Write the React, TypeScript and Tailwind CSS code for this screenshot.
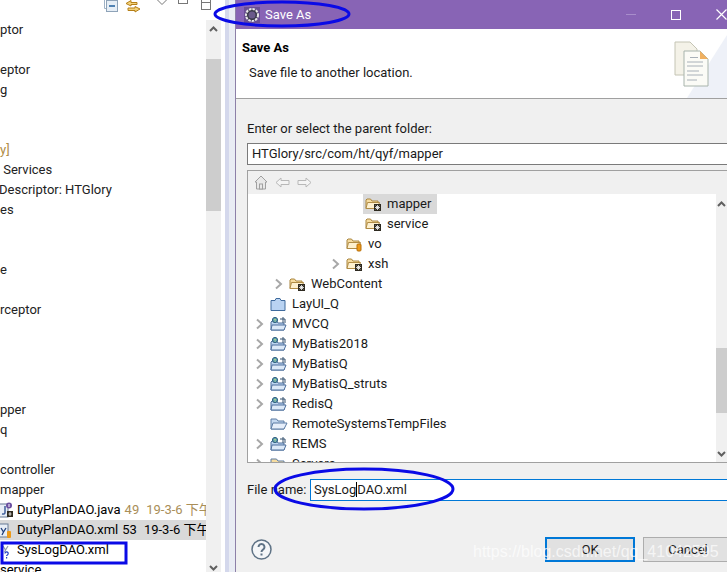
const font = { fontFamily: 'Roboto, "Noto Sans CJK SC", sans-serif' }

const Chevron = () => (
  <svg width="9" height="12" viewBox="0 0 9 12" fill="none" stroke="#a8a8a8" strokeWidth="2">
    <path d="M2 1.5 7 6l-5 4.5" />
  </svg>
)

const Folder = ({ badge }: { badge?: 'pkg' | 'jar' }) => (
  <svg width="17" height="16" viewBox="0 0 17 16">
    <path d="M1 4V12.5H13V5H7L5.5 3H2Z" fill="#f6dca0" stroke="#a9853f" />
    <path d="M2.5 6.5H14.5L12.5 12.5H1Z" fill="#fdf0cf" stroke="#b08c46" />
    {badge === 'pkg' && (
      <>
        <rect x="9" y="8" width="7" height="7" fill="#2e2a20" />
        <path d="M12.5 9v5M10 11.5h5M10.7 9.7l3.6 3.6M14.3 9.7l-3.6 3.6" stroke="#fff" strokeWidth="0.8" />
      </>
    )}
    {badge === 'jar' && <rect x="11" y="8" width="4" height="7" rx="1" fill="#ec9a1a" stroke="#b86f08" />}
  </svg>
)

const Project = () => (
  <svg width="18" height="16" viewBox="0 0 18 16">
    <path d="M1 6V14H14V7H8L6.5 5H2Z" fill="#bcd4f0" stroke="#4c6f9c" />
    <path d="M2 9H16L14 14H1Z" fill="#dce9f8" stroke="#4c6f9c" />
    <circle cx="5" cy="4" r="2.6" fill="#5f9fb0" stroke="#2f5f7e" />
    <path d="M4 3.5h2M4.5 5h1.5" stroke="#a4d08a" />
    <path d="M10 3h5v4M13 1v6" fill="none" stroke="#35506e" />
  </svg>
)

const OpenFolder = ({ color }: { color: string }) => (
  <svg width="18" height="16" viewBox="0 0 18 16">
    <path d="M1 3V13H14V5H8L6.5 3Z" fill={color} stroke="#5b7ba3" />
    <path d="M3 7H17L14 13H1Z" fill="#e6eefa" stroke="#5b7ba3" />
  </svg>
)

const ClosedProject = () => (
  <svg width="16" height="15" viewBox="0 0 16 15">
    <path d="M1 3.5H5L6 1.5H10L11 3.5H15V13.5H1Z" fill="#b9d3f2" stroke="#3f6a9c" />
  </svg>
)

const Row = ({ indent, arrow, icon, label, active }: { indent: number; arrow?: boolean; icon: React.ReactNode; label: string; active?: boolean }) => (
  <div className="flex h-5 items-center" style={{ paddingLeft: indent }}>
    <span className="flex w-[15px] shrink-0 items-center pl-[2px]">{arrow && <Chevron />}</span>
    <span className={`flex h-5 items-center pr-[6px] ${active ? 'bg-[#d9d9d9]' : ''}`}>
      <span className="ml-[2px] flex w-[22px] shrink-0 items-center">{icon}</span>
      <span className="whitespace-nowrap text-[#1a1a1a]">{label}</span>
    </span>
  </div>
)

const sideRows = [
  'ptor', '', 'eptor', 'g', '', '', 'y]', ' Services', 'Descriptor: HTGlory', 'es', '', '', 'e', '', 'rceptor', '', '', '', '', 'pper', 'q', '', 'controller', 'mapper',
]

export default function App() {
  return (
    <div className="relative flex h-[572px] w-[727px] overflow-hidden bg-white text-[13px] leading-5" style={font}>
      <div className="flex w-[206px] shrink-0 flex-col">
        <div className="flex h-5 w-[221px] shrink-0 items-start pl-[104px]">
          <svg className="shrink-0" width="14" height="13" viewBox="0 0 14 13" fill="none">
            <path d="M0.5 0V8.5H3" stroke="#9fb2c6" />
            <rect x="2.5" y="0.5" width="11" height="11" fill="#e6eef6" stroke="#8ea3b8" />
            <path d="M5 6h6" stroke="#1f5f9c" strokeWidth="1.5" />
          </svg>
          <svg className="ml-[7px] shrink-0" width="16" height="13" viewBox="0 0 16 13" fill="#f2d27a" stroke="#b57f18">
            <path d="M6 0.5 1 3.5 6 6V4.5H12V2.5H6Z" />
            <path d="M10 6.5 15 9 10 12V10.5H3V8H10Z" />
          </svg>
          <svg className="ml-[16px] shrink-0" width="10" height="5" viewBox="0 0 10 5" fill="none" stroke="#777"><path d="M0.5 0 5 4.5 9.5 0" /></svg>
          <div className="ml-[11px] h-[4px] w-[10px] border border-t-0 border-[#777]" />
          <div className="ml-[13px] flex h-[10px] w-[10px] flex-col border border-t-0 border-[#777]">
            <div className="mt-[2px] h-px bg-[#777]" />
          </div>
        </div>
        {sideRows.map((t, i) => (
          <div key={i} className={`h-5 shrink-0 whitespace-pre ${t === 'y]' ? 'text-[#b08c46]' : 'text-[#222]'} ${t === 'Descriptor: HTGlory' ? '-ml-[1px]' : ''}`}>
            {t}
          </div>
        ))}
        <div className="flex h-5 shrink-0 items-center overflow-hidden whitespace-nowrap">
          <svg className="mr-[2px] shrink-0" width="15" height="17" viewBox="0 0 15 17">
            <rect x="-3" y="2" width="11" height="13" fill="#e8eef6" stroke="#667a96" />
            <path d="M5 4V10.5Q5 12.5 2 12" fill="none" stroke="#3f5f9c" strokeWidth="1.5" />
            <rect x="7" y="9" width="6" height="6" fill="#2e2a20" />
            <path d="M10 10v4M8.5 12h3" stroke="#fff" strokeWidth="0.8" />
            <circle cx="9" cy="3.5" r="3" fill="#6b4fa0" />
            <path d="M9 2v3" stroke="#fff" />
          </svg>
          <span>DutyPlanDAO.java</span>
          <span className="ml-1 text-[#a98e58]">49</span>
          <span className="ml-[7px] text-[#a98e58]">19-3-6 下午</span>
        </div>
        <div className="flex h-5 shrink-0 items-center overflow-hidden whitespace-nowrap bg-[#d9d9d9]">
          <svg className="mr-[2px] shrink-0" width="15" height="17" viewBox="0 0 15 17">
            <rect x="-3" y="2" width="11" height="13" fill="#e8eef6" stroke="#667a96" />
            <path d="M1 6 3.5 10 6 6M3.5 10 2 13" fill="none" stroke="#1f3f7c" strokeWidth="1.3" />
            <rect x="7" y="9" width="4" height="7" rx="1" fill="#ec9a1a" />
          </svg>
          <span>DutyPlanDAO.xml</span>
          <span className="ml-1">53</span>
          <span className="ml-[7px]">19-3-6 下午</span>
        </div>
        <div className="flex h-5 shrink-0 items-center whitespace-nowrap">
          <svg className="mr-[2px] shrink-0" width="15" height="17" viewBox="0 0 15 17" fill="none">
            <path d="M3 4 5.5 8 8 4M5.5 8 4.5 10" stroke="#8f98a8" strokeWidth="1.2" />
            <path d="M5 11.5a1.6 1.6 0 1 1 2.4 1.4c-.5.3-.8.6-.8 1.2M6.6 15v1.4" stroke="#1f3fc0" strokeWidth="1.2" />
          </svg>
          <span>SysLogDAO.xml</span>
        </div>
        <div className="h-5 shrink-0">service</div>
      </div>

      <div className="flex w-[15px] shrink-0 flex-col pt-5">
        <div className="flex h-[39px] shrink-0 justify-center bg-[#f0f0f0] pt-[6px]">
          <svg width="9" height="6" viewBox="0 0 9 6" fill="none" stroke="#606060" strokeWidth="2"><path d="M1 5 4.5 1.5 8 5" /></svg>
        </div>
        <div className="h-[152px] shrink-0 bg-[#cdcdcd]" />
        <div className="flex flex-1 items-end justify-center bg-[#f0f0f0] pb-[1px]">
          <svg width="9" height="6" viewBox="0 0 9 6" fill="none" stroke="#606060" strokeWidth="2"><path d="M1 1 4.5 4.5 8 1" /></svg>
        </div>
      </div>
      <div className="w-1 shrink-0 bg-white" />
      <div className="w-1 shrink-0 bg-[#d4d8ec]" />
      <div className="w-[6px] shrink-0 bg-[#e9ecf4]" />
      <div className="w-px shrink-0 bg-[#8d80a8]" />

      <div className="flex min-w-0 flex-1 flex-col bg-[#f0f0f0] text-[#1a1a1a]">
        <div className="flex h-[29px] shrink-0 items-center bg-[#8864b5] pl-2 text-white">
          <svg className="shrink-0" width="16" height="16" viewBox="0 0 16 16">
            <rect width="16" height="16" fill="#6a4f94" />
            <circle cx="8" cy="8" r="6" fill="#3a3a4a" stroke="#e8e8e8" strokeWidth="2" strokeDasharray="2.5 1" />
            <circle cx="8" cy="8" r="3.5" fill="#6a5a8a" />
          </svg>
          <span className="ml-[5px]">Save As</span>
          <div className="ml-auto flex items-center">
            <div className="h-px w-[10px] bg-[#a88dcb]" />
            <div className="ml-[35px] h-[10px] w-[10px] border border-white" />
            <svg className="ml-[35px] shrink-0" width="11" height="11" viewBox="0 0 11 11" fill="none" stroke="#ffffff" strokeWidth="1.2"><path d="M0.5 0.5 10.5 10.5M10.5 0.5 0.5 10.5" /></svg>
          </div>
        </div>

        <div className="flex h-[70px] shrink-0 justify-between border-b border-[#a0a0a0] bg-white">
          <div className="pl-[6px]">
            <div className="pt-[9px] font-bold text-black">Save As</div>
            <div className="pl-[7px] pt-[5px]">Save file to another location.</div>
          </div>
          <svg className="shrink-0" width="60" height="69" viewBox="0 0 60 69">
            <path d="M60 6 20 69H60Z" fill="#eef1f8" />
            <path d="M8 13H23L30 20V46H8Z" fill="#f4f2e8" stroke="#c4c4b4" />
            <path d="M17 22H33L41 30V57H17Z" fill="#fbfbf6" stroke="#a8b4ac" />
            <path d="M33 22V30H41Z" fill="#f0b060" />
            <path d="M23 28.5H31M20 33H36M20 37H36M20 42H32M20 46H36M20 51H30" stroke="#a8b0b8" />
          </svg>
        </div>

        <div className="flex min-h-0 flex-1 flex-col pl-[11px]">
          <div className="h-5 pt-[20px] leading-5">Enter or select the parent folder:</div>
          <div className="mt-[24px] h-[22px] shrink-0 border border-r-0 border-[#7a7a7a] bg-white pl-1 leading-5">HTGlory/src/com/ht/qyf/mapper</div>
          <div className="mt-[5px] flex h-[293px] shrink-0 flex-col border border-r-0 border-[#a0a0a0]">
            <div className="flex h-[23px] shrink-0 items-center gap-[7px] pl-[6px]">
              <svg width="14" height="15" viewBox="0 0 14 15" fill="#e8e8e8" stroke="#a0a0a0"><path d="M7 1 13 7H11.5V14H2.5V7H1Z" /><rect x="5.5" y="9" width="3" height="5" /></svg>
              <svg width="15" height="11" viewBox="0 0 15 11" fill="#f4f4f4" stroke="#b8b8b8"><path d="M1 5.5 6 1V3.5H14V7.5H6V10Z" /></svg>
              <svg width="15" height="11" viewBox="0 0 15 11" fill="#f4f4f4" stroke="#b8b8b8"><path d="M14 5.5 9 1V3.5H1V7.5H9V10Z" /></svg>
            </div>
            <div className="flex min-h-0 flex-1">
              <div className="min-w-0 flex-1 overflow-hidden bg-white">
                <Row indent={100} icon={<Folder badge="pkg" />} label="mapper" active />
                <Row indent={100} icon={<Folder badge="pkg" />} label="service" />
                <Row indent={81} icon={<Folder badge="jar" />} label="vo" />
                <Row indent={81} arrow icon={<Folder badge="pkg" />} label="xsh" />
                <Row indent={24} arrow icon={<Folder badge="pkg" />} label="WebContent" />
                <Row indent={5} icon={<ClosedProject />} label="LayUI_Q" />
                <Row indent={5} arrow icon={<Project />} label="MVCQ" />
                <Row indent={5} arrow icon={<Project />} label="MyBatis2018" />
                <Row indent={5} arrow icon={<Project />} label="MyBatisQ" />
                <Row indent={5} arrow icon={<Project />} label="MyBatisQ_struts" />
                <Row indent={5} arrow icon={<Project />} label="RedisQ" />
                <Row indent={5} icon={<OpenFolder color="#c4d8f0" />} label="RemoteSystemsTempFiles" />
                <Row indent={5} arrow icon={<Project />} label="REMS" />
                <Row indent={5} arrow icon={<OpenFolder color="#f6dca0" />} label="Servers" />
              </div>
              <div className="flex w-[11px] shrink-0 flex-col bg-[#f0f0f0]">
                <div className="flex h-[154px] justify-center pt-[7px]">
                  <svg className="shrink-0" width="9" height="6" viewBox="0 0 9 6" fill="none" stroke="#606060" strokeWidth="2"><path d="M1 5 4.5 1.5 8 5" /></svg>
                </div>
                <div className="h-[65px] bg-[#cdcdcd]" />
                <div className="flex flex-1 items-end justify-center pb-[5px]">
                  <svg className="shrink-0" width="9" height="6" viewBox="0 0 9 6" fill="none" stroke="#606060" strokeWidth="2"><path d="M1 1 4.5 4.5 8 1" /></svg>
                </div>
              </div>
            </div>
          </div>

          <div className="mt-[16px] flex h-[22px] shrink-0 items-center">
            <span className="w-[63px] shrink-0 whitespace-nowrap">File name:</span>
            <div className="h-[22px] flex-1 border border-r-0 border-[#0078d7] bg-white pl-[3px] leading-5">
              SysLog<span className="border-l border-black">DAO.xml</span>
            </div>
          </div>

          <div className="mt-[36px] flex shrink-0 items-center">
            <svg className="ml-[4px] shrink-0" width="21" height="21" viewBox="0 0 21 21">
              <circle cx="10.5" cy="10.5" r="9.5" fill="#f4f6f8" stroke="#5f7386" strokeWidth="1.5" />
              <path d="M7.5 8a3 3 0 1 1 4.5 2.6c-1 .6-1.5 1.2-1.5 2.4" fill="none" stroke="#5f7386" strokeWidth="2" />
              <rect x="9.5" y="14.5" width="2" height="2" fill="#5f7386" />
            </svg>
            <div className="ml-[273px] flex h-[25px] w-[90px] shrink-0 items-center justify-center border-2 border-[#0078d7] bg-[#e1e1e1]">OK</div>
            <div className="ml-[8px] flex h-[25px] w-[90px] shrink-0 items-center justify-center border border-[#adadad] bg-[#e1e1e1]">Cancel</div>
          </div>
        </div>
      </div>

      {/* annotations drawn on top of the screenshot */}
      <svg className="pointer-events-none absolute inset-0" width="727" height="572" fill="none" stroke="#0a0ae6" strokeWidth="3">
        <ellipse cx="282" cy="14" rx="67" ry="12" />
        <ellipse cx="364" cy="489" rx="89" ry="20" />
        <rect x="2" y="543" width="124" height="20" />
      </svg>
      <div className="pointer-events-none absolute left-[473px] top-[542px] whitespace-nowrap text-[16px] text-white/70" style={{ fontFamily: '"Liberation Sans", sans-serif' }}>
        https://blog.csdn.net/qq_41042595
      </div>
    </div>
  )
}
